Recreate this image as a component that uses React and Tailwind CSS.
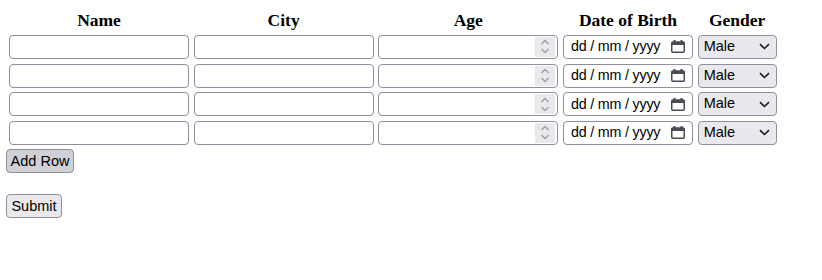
import React from "react";

const sans = { fontFamily: '"Liberation Sans", Arial, sans-serif' };

function CalendarIcon() {
  return (
    <svg width="14" height="13" viewBox="0 0 14 13" className="shrink-0">
      <rect x="2.5" y="0" width="2" height="2.5" fill="#4a4a55" />
      <rect x="9.5" y="0" width="2" height="2.5" fill="#4a4a55" />
      <rect x="0.75" y="2" width="12.5" height="10.25" rx="1" fill="none" stroke="#4a4a55" strokeWidth="1.5" />
      <rect x="0.75" y="2" width="12.5" height="3" fill="#4a4a55" />
    </svg>
  );
}

function Chevron() {
  return (
    <svg width="11" height="7" viewBox="0 0 11 7" className="shrink-0">
      <path d="M1 1.2 L5.5 5.5 L10 1.2" fill="none" stroke="#1b1b1b" strokeWidth="1.6" />
    </svg>
  );
}

function Spinner() {
  return (
    <div className="w-[20px] h-full bg-[#e9e9ed] flex flex-col items-center justify-center gap-[3px]">
      <svg width="10" height="6" viewBox="0 0 10 6">
        <path d="M1.5 5 L5 1.5 L8.5 5" fill="none" stroke="#9b9ba3" strokeWidth="1.3" />
      </svg>
      <svg width="10" height="6" viewBox="0 0 10 6">
        <path d="M1.5 1 L5 4.5 L8.5 1" fill="none" stroke="#9b9ba3" strokeWidth="1.3" />
      </svg>
    </div>
  );
}

function Row() {
  return (
    <>
      <input
        type="text"
        className="w-[180px] h-[24px] border border-[#8f8f9d] rounded-[4px] bg-white px-[3px] outline-none"
        style={sans}
      />
      <input
        type="text"
        className="w-[180px] h-[24px] border border-[#8f8f9d] rounded-[4px] bg-white px-[3px] outline-none"
        style={sans}
      />
      <div className="w-[180px] h-[24px] border border-[#8f8f9d] rounded-[4px] bg-white flex items-stretch justify-end p-[1px] pr-[2px]">
        <Spinner />
      </div>
      <div
        className="w-[130px] h-[24px] border border-[#8f8f9d] rounded-[4px] bg-white flex items-center pl-[7px] pr-[7px] text-[14.3px] text-black whitespace-nowrap"
        style={sans}
      >
        <span className="flex-1 tracking-[-0.2px]">dd / mm / yyyy</span>
        <CalendarIcon />
      </div>
      <div
        className="w-[79px] h-[24px] border border-[#8f8f9d] rounded-[4px] bg-[#e9e9ed] flex items-center pl-[5px] pr-[6px] text-[14.5px] text-black"
        style={sans}
      >
        <span className="flex-1">Male</span>
        <Chevron />
      </div>
    </>
  );
}

export default function App() {
  const headers = ["Name", "City", "Age", "Date of Birth", "Gender"];
  return (
    <div className="w-[822px] h-[280px] bg-white pl-[6px] flex flex-col items-start">
      <div className="pl-[3px] pt-[10.33px] grid grid-cols-[180px_180px_180px_130px_79px] gap-x-[4.67px] gap-y-[4.67px] w-max">
        {headers.map((h) => (
          <div
            key={h}
            className="text-center font-bold text-[17.5px] leading-[20px] text-black whitespace-nowrap"
            style={{ fontFamily: '"Liberation Serif", "Times New Roman", serif' }}
          >
            {h}
          </div>
        ))}
        <Row />
        <Row />
        <Row />
        <Row />
      </div>
      <button
        type="button"
        className="mt-[3.7px] w-[68px] h-[24px] border border-[#8f8f9d] rounded-[4px] bg-[#d0d0d7] text-[14.5px] leading-[22px] text-black"
        style={sans}
      >
        Add Row
      </button>
      <button
        type="submit"
        className="mt-[21.3px] w-[56px] h-[24px] border border-[#8f8f9d] rounded-[4px] bg-[#e9e9ed] text-[14.5px] leading-[22px] text-black"
        style={sans}
      >
        Submit
      </button>
    </div>
  );
}
